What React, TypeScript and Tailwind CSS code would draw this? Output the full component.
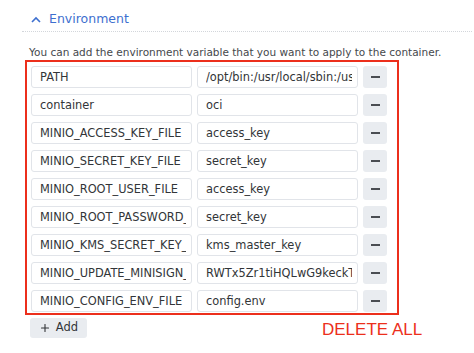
import { Plus } from 'lucide-react'

const rows = [
  ['PATH', '/opt/bin:/usr/local/sbin:/usr/local/bin:/usr/sbin:/usr/bin:/sbin:/bin'],
  ['container', 'oci'],
  ['MINIO_ACCESS_KEY_FILE', 'access_key'],
  ['MINIO_SECRET_KEY_FILE', 'secret_key'],
  ['MINIO_ROOT_USER_FILE', 'access_key'],
  ['MINIO_ROOT_PASSWORD_FILE', 'secret_key'],
  ['MINIO_KMS_SECRET_KEY_FILE', 'kms_master_key'],
  ['MINIO_UPDATE_MINISIGN_PUBKEY', 'RWTx5Zr1tiHQLwG9keckT0c45M3AGeHD6IvimQHpyRywVWGbP1aVSGav'],
  ['MINIO_CONFIG_ENV_FILE', 'config.env'],
]

function Field({ value }: { value: string }) {
  return (
    <div className="h-[22px] w-[161px] shrink-0 overflow-hidden whitespace-nowrap rounded-[3px] border border-[#e1e4e9] bg-white pl-[8px] pr-[5px] text-[11.4px] leading-[20px] text-[#323538]">
      <div className="overflow-hidden">{value}</div>
    </div>
  )
}

export default function App() {
  return (
    <div className="h-[353px] w-[474px] bg-white pl-[22px] pr-[2px] font-['DejaVu_Sans',sans-serif]">
      <div className="flex h-[32px] items-center border-b border-dotted border-[#d3d6db] pl-[9px] pt-[7px]">
        <svg width="10" height="7" viewBox="0 0 10 7">
          <path d="M1 6 L5 2 L9 6" fill="none" stroke="#3d6fcf" strokeWidth="1.6" />
        </svg>
        <span className="ml-[8px] text-[12.5px] leading-[16px] text-[#3d6fcf]">Environment</span>
      </div>

      <p className="mt-[13px] whitespace-nowrap pl-[7px] text-[10.5px] leading-[14px] text-[#45484c]">
        You can add the environment variable that you want to apply to the container.
      </p>

      <div className="ml-[3px] mt-[1px] w-[374px] border-2 border-[#ec2f1c] pb-[1px] pl-[4px] pt-[4px]">
        <div className="flex flex-col gap-[6px]">
          {rows.map(([k, v], i) => (
            <div key={i} className="flex items-center">
              <Field value={k} />
              <div className="ml-[5px]">
                <Field value={v} />
              </div>
              <button className="ml-[5px] flex h-[22px] w-[24px] items-center justify-center rounded-[3px] bg-[#e9ecf0]">
                <span className="block h-[2px] w-[9px] bg-[#4a4d52]" />
              </button>
            </div>
          ))}
        </div>
      </div>

      <div className="flex items-start">
        <button className="ml-[8px] mt-[3px] flex h-[20px] w-[57px] items-center justify-center gap-[5px] rounded-[3px] bg-[#e9ecf0] text-[11.5px] text-[#323538]">
          <Plus size={12} strokeWidth={2.2} />
          <span>Add</span>
        </button>
        <span className="ml-[235px] mt-[5px] font-['Liberation_Sans',sans-serif] text-[17px] leading-[20px] text-[#ec2f1c]">
          DELETE ALL
        </span>
      </div>
    </div>
  )
}
